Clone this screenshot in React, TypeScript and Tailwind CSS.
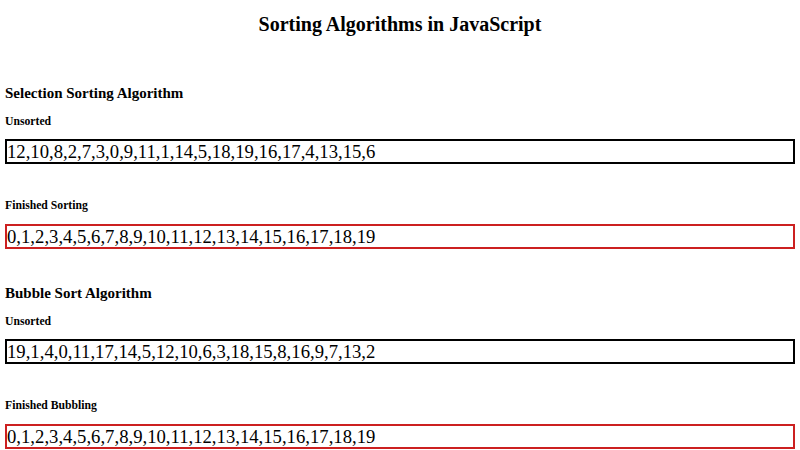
const selectionUnsorted = [12, 10, 8, 2, 7, 3, 0, 9, 11, 1, 14, 5, 18, 19, 16, 17, 4, 13, 15, 6];
const bubbleUnsorted = [19, 1, 4, 0, 11, 17, 14, 5, 12, 10, 6, 3, 18, 15, 8, 16, 9, 7, 13, 2];

function selectionSort(input: number[]) {
  const arr = [...input];
  for (let i = 0; i < arr.length; i++) {
    let min = i;
    for (let j = i + 1; j < arr.length; j++) if (arr[j] < arr[min]) min = j;
    [arr[i], arr[min]] = [arr[min], arr[i]];
  }
  return arr;
}

function bubbleSort(input: number[]) {
  const arr = [...input];
  for (let i = 0; i < arr.length; i++)
    for (let j = 0; j < arr.length - i - 1; j++)
      if (arr[j] > arr[j + 1]) [arr[j], arr[j + 1]] = [arr[j + 1], arr[j]];
  return arr;
}

function Box({ values, sorted }: { values: number[]; sorted?: boolean }) {
  return (
    <div
      className={`border-2 text-[18.7px] leading-[21px] text-black ${sorted ? "border-[#cc2020]" : "border-black"}`}
    >
      {values.join(",")}
    </div>
  );
}

function Label({ children }: { children: React.ReactNode }) {
  return <h5 className="text-[11.7px] leading-[14px] font-bold text-black">{children}</h5>;
}

function Section({ title, unsorted, sorted, doneLabel }: { title: string; unsorted: number[]; sorted: number[]; doneLabel: string }) {
  return (
    <section>
      <h3 className="text-[15px] leading-[18px] font-bold text-black">{title}</h3>
      <div className="mt-[13px]">
        <Label>Unsorted</Label>
      </div>
      <div className="mt-[10px]">
        <Box values={unsorted} />
      </div>
      <div className="mt-[35px]">
        <Label>{doneLabel}</Label>
      </div>
      <div className="mt-[11px]">
        <Box values={sorted} sorted />
      </div>
    </section>
  );
}

export default function App() {
  return (
    <div className="bg-white px-[5px] pt-[12px] min-h-[450px]" style={{ fontFamily: '"Liberation Serif", "Times New Roman", serif' }}>
      <h1 className="text-center text-[20px] leading-[24px] font-bold text-black">Sorting Algorithms in JavaScript</h1>
      <div className="mt-[48px]">
        <Section title="Selection Sorting Algorithm" unsorted={selectionUnsorted} sorted={selectionSort(selectionUnsorted)} doneLabel="Finished Sorting" />
      </div>
      <div className="mt-[35px]">
        <Section title="Bubble Sort Algorithm" unsorted={bubbleUnsorted} sorted={bubbleSort(bubbleUnsorted)} doneLabel="Finished Bubbling" />
      </div>
    </div>
  );
}
